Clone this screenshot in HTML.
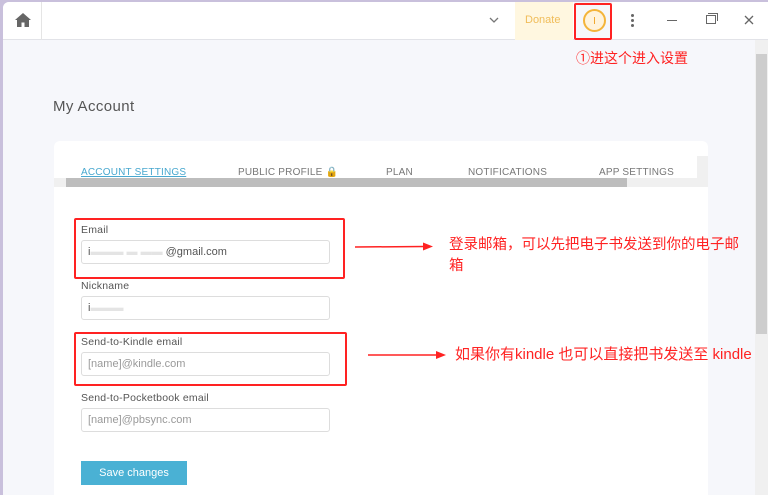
<!DOCTYPE html>
<html><head><meta charset="utf-8"><style>
*{margin:0;padding:0;box-sizing:border-box}
html,body{width:768px;height:495px;overflow:hidden}
body{background:#c9c0dc;font-family:"Liberation Sans","Noto Sans CJK SC",sans-serif;position:relative}
.win{position:absolute;left:3px;top:2px;width:765px;height:493px;background:#f6f7fb;border-top-left-radius:6px;overflow:hidden}
.top{position:absolute;left:0;top:0;right:0;height:38px;background:#fff;border-bottom:1px solid #e2e3e8}
.a{position:absolute}
.t{position:absolute;white-space:nowrap}
.card{position:absolute;left:51px;top:139px;width:654px;height:354px;background:#fff;border-radius:6px 6px 0 0}
.lbl{position:absolute;font-size:10.5px;color:#555;left:78px;letter-spacing:0.2px}
.inp{position:absolute;left:78px;width:249px;height:24px;border:1px solid #ddd;border-radius:3px;font-size:11px;color:#555;padding:5px 6px}
.red{position:absolute;border:2px solid #f22;border-radius:2px}
.ann{position:absolute;color:#f22;font-size:14.5px;white-space:nowrap;line-height:21px}
.tab{position:absolute;top:165px;font-size:10px;color:#777;letter-spacing:0.2px}
</style></head><body>
<div class="win">
<div class="top">
<div class="a" style="left:38px;top:0;width:1px;height:38px;background:#e5e5e5"></div>
<svg class="a" style="left:12px;top:11px" width="16" height="14" viewBox="0 0 16 14"><path d="M8 0L0 7h2v7h4.5V9.5h3V14H14V7h2z" fill="#666"/></svg>
<svg class="a" style="left:486px;top:15px" width="10" height="7"><path d="M1 1l4 4 4-4" stroke="#777" stroke-width="1.3" fill="none"/></svg>
<div class="a" style="left:512px;top:0;width:58px;height:38px;background:#fff7e0"></div>
<div class="t" style="left:522px;top:12px;font-size:11px;color:#f0bd5a">Donate</div>
<div class="a" style="left:571px;top:0;width:38px;height:38px;background:#f6f7fb"></div>
<div class="a" style="left:580px;top:7px;width:23px;height:23px;border:2px solid #f4b43a;border-radius:50%;background:#fff3dc"></div>
<div class="a" style="left:591px;top:15px;width:1px;height:7px;background:#f0a830"></div>
<div class="red" style="left:571px;top:1px;width:38px;height:37px"></div>
<div class="a" style="left:628px;top:12px;width:3px;height:3px;background:#666;border-radius:50%;box-shadow:0 5px 0 #666,0 10px 0 #666"></div>
<div class="a" style="left:664px;top:18px;width:10px;height:1.3px;background:#666"></div>
<div class="a" style="left:703px;top:13px;width:10px;height:9px;border:1.3px solid #666"></div>
<div class="a" style="left:705px;top:11px;width:10px;height:8px;border-top:1.3px solid #666;border-right:1.3px solid #666"></div>
<svg class="a" style="left:741px;top:13px" width="10" height="10"><path d="M1 1l8 8M9 1l-8 8" stroke="#666" stroke-width="1.3"/></svg>
</div>
<div class="ann" style="left:573px;top:46px;font-size:14px">①进这个进入设置</div>
<div class="t" style="left:50px;top:96px;font-size:15px;color:#555;letter-spacing:0.4px">My Account</div>
<div class="card"></div>
<div class="tab" style="left:78px;color:#49a8cf;text-decoration:underline">ACCOUNT SETTINGS</div>
<div class="tab" style="left:235px">PUBLIC PROFILE &#128274;</div>
<div class="tab" style="left:383px">PLAN</div>
<div class="tab" style="left:465px">NOTIFICATIONS</div>
<div class="tab" style="left:596px">APP SETTINGS</div>
<div class="a" style="left:51px;top:176px;width:643px;height:9px;background:#f0f0f0"></div>
<div class="a" style="left:63px;top:176px;width:561px;height:9px;background:#bdbdbd"></div>
<div class="a" style="left:694px;top:154px;width:11px;height:31px;background:#f0f0f0"></div>
<div class="red" style="left:71px;top:216px;width:271px;height:61px"></div>
<div class="lbl" style="top:222px">Email</div>
<div class="inp" style="top:238px">i<span style="color:#e4e4e4">▬▬▬ ▬ ▬▬</span> @gmail.com</div>
<div class="lbl" style="top:278px">Nickname</div>
<div class="inp" style="top:294px">i<span style="color:#e4e4e4">▬▬▬</span></div>
<div class="red" style="left:71px;top:330px;width:273px;height:54px"></div>
<div class="lbl" style="top:334px">Send-to-Kindle email</div>
<div class="inp" style="top:350px;color:#999">[name]@kindle.com</div>
<div class="lbl" style="top:390px">Send-to-Pocketbook email</div>
<div class="inp" style="top:406px;color:#999">[name]@pbsync.com</div>
<div class="a" style="left:78px;top:459px;width:106px;height:24px;background:#4ab1d4;color:#fff;font-size:11px;text-align:center;line-height:24px">Save changes</div>
<svg class="a" style="left:352px;top:240px" width="80" height="10"><path d="M0 5L70 4.5" stroke="#f22" stroke-width="1.5"/><path d="M68 0.5L78 4.5 68 8.5z" fill="#f22"/></svg>
<div class="ann" style="left:446px;top:233px">登录邮箱，可以先把电子书发送到你的电子邮<br>箱</div>
<svg class="a" style="left:365px;top:348px" width="80" height="10"><path d="M0 5L70 5" stroke="#f22" stroke-width="1.5"/><path d="M68 1L78 5 68 9z" fill="#f22"/></svg>
<div class="ann" style="left:452px;top:342px;font-size:15px">如果你有kindle 也可以直接把书发送至 kindle</div>
<div class="a" style="left:752px;top:38px;width:13px;height:460px;background:#f0f0f0"></div>
<div class="a" style="left:753px;top:52px;width:11px;height:280px;background:#cdcdcd"></div>
</div>
</body></html>
